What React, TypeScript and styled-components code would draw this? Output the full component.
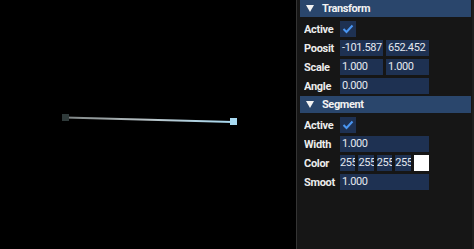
import React from "react";
import styled, { createGlobalStyle } from "styled-components";

const Global = createGlobalStyle`
  html, body { margin: 0; padding: 0; background: #000; }
  body { font-family: "Roboto", "Liberation Sans", sans-serif; }
`;

const Page = styled.div`
  display: flex;
  width: 474px;
  height: 249px;
  overflow: hidden;
  background: #000;
`;

const Canvas = styled.div`
  width: 296px;
  height: 249px;
  flex: none;
  background: #000;
`;

const Panel = styled.div`
  width: 178px;
  height: 249px;
  box-sizing: border-box;
  background: #161616;
  border-left: 1px solid #343434;
  border-right: 2px solid #1f1f1f;
  padding: 0 1px 0 3px;
  display: flex;
  flex-direction: column;
  gap: 2px;
`;

const Section = styled.div`
  display: flex;
  flex-direction: column;
`;

const Header = styled.div`
  height: 17px;
  background: #2a466c;
  display: flex;
  align-items: center;
  gap: 8px;
  padding-left: 6px;
  color: #f2f2f2;
  font-size: 11px;
  font-weight: 700;
  letter-spacing: -0.4px;
`;

const Rows = styled.div`
  display: flex;
  flex-direction: column;
  gap: 3px;
  padding-top: 4px;
`;

const Row = styled.div`
  display: flex;
  align-items: center;
  height: 16px;
`;

const Label = styled.div`
  width: 33px;
  margin-left: 4px;
  margin-right: 3px;
  overflow: hidden;
  white-space: nowrap;
  color: #ececec;
  font-size: 11px;
  font-weight: 700;
  letter-spacing: -0.3px;
`;

const Fields = styled.div<{ $cols: string }>`
  display: grid;
  grid-template-columns: ${(p) => p.$cols};
  gap: 3px;
  width: 89px;
  height: 16px;
`;

const Field = styled.div<{ $pad?: number }>`
  height: 16px;
  background: #1e3152;
  color: #e4e8ee;
  font-size: 11px;
  letter-spacing: -0.4px;
  line-height: 16px;
  padding-left: ${(p) => p.$pad ?? 2}px;
  overflow: hidden;
  white-space: nowrap;
`;

const Swatch = styled.div`
  height: 16px;
  background: #ffffff;
`;

const Check = styled.div`
  width: 16px;
  height: 16px;
  background: #1e3152;
  display: flex;
  align-items: center;
  justify-content: center;
`;

const Tri = () => (
  <svg width="8" height="7" viewBox="0 0 8 7">
    <path d="M0 0 L8 0 L4 7 Z" fill="#f2f2f2" />
  </svg>
);

const Tick = () => (
  <svg width="12" height="10" viewBox="0 0 12 10">
    <path d="M1.5 5 L4.5 8 L10.5 1.5" stroke="#4a96f2" strokeWidth="2" fill="none" />
  </svg>
);

const CheckRow = ({ label }: { label: string }) => (
  <Row>
    <Label>{label}</Label>
    <Check>
      <Tick />
    </Check>
  </Row>
);

const FieldRow = ({ label, values, cols }: { label: string; values: string[]; cols: string }) => (
  <Row>
    <Label>{label}</Label>
    <Fields $cols={cols}>
      {values.map((v, i) => (
        <Field key={i}>{v}</Field>
      ))}
    </Fields>
  </Row>
);

export default function App() {
  return (
    <Page>
      <Global />
      <Canvas>
        <svg width="296" height="249" viewBox="0 0 296 249">
          <defs>
            <linearGradient id="ln" x1="65" y1="117" x2="233" y2="122" gradientUnits="userSpaceOnUse">
              <stop offset="0" stopColor="#7e8484" />
              <stop offset="0.5" stopColor="#b9c4c8" />
              <stop offset="1" stopColor="#a8daf2" />
            </linearGradient>
          </defs>
          <line x1="65" y1="117.5" x2="233" y2="122" stroke="url(#ln)" strokeWidth="2" />
          <rect x="62" y="114" width="7" height="7" fill="#2f3a3a" />
          <rect x="230" y="118" width="7" height="7" fill="#a8daf2" />
        </svg>
      </Canvas>
      <Panel>
        <Section>
          <Header>
            <Tri />
            Transform
          </Header>
          <Rows>
            <CheckRow label="Active" />
            <FieldRow label="Poosit" values={["-101.587", "652.452"]} cols="1fr 1fr" />
            <FieldRow label="Scale" values={["1.000", "1.000"]} cols="1fr 1fr" />
            <FieldRow label="Angle" values={["0.000"]} cols="1fr" />
          </Rows>
        </Section>
        <Section>
          <Header>
            <Tri />
            Segment
          </Header>
          <Rows>
            <CheckRow label="Active" />
            <FieldRow label="Width" values={["1.000"]} cols="1fr" />
            <Row>
              <Label>Color</Label>
              <Fields $cols="repeat(5, 1fr)">
                {["255", "255", "255", "255"].map((v, i) => (
                  <Field key={i} $pad={0}>
                    {v}
                  </Field>
                ))}
                <Swatch />
              </Fields>
            </Row>
            <FieldRow label="Smoot" values={["1.000"]} cols="1fr" />
          </Rows>
        </Section>
      </Panel>
    </Page>
  );
}
